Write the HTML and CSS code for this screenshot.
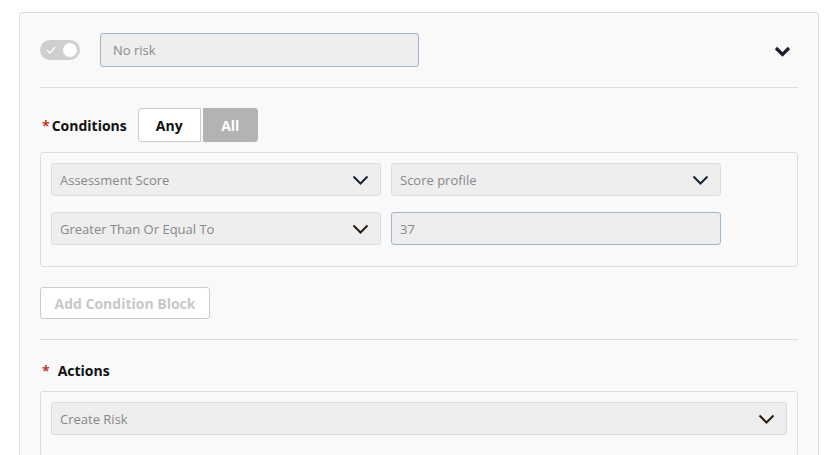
FILE: index.html
```html
<!DOCTYPE html>
<html lang="en">
<head>
    <meta charset="UTF-8">
    <title>Rule Editor</title>
    <link rel="stylesheet" href="styles.css">
</head>
<body>

<div class="rule-card">
    <div class="rule-header">
        <div class="toggle">
            <svg class="toggle-check" width="10" height="8" viewBox="0 0 10 8"><path d="M1 4l3 3 5-6" fill="none" stroke="#fff" stroke-width="1.3"/></svg>
            <span class="toggle-knob"></span>
        </div>
        <div class="text-input name-input">No risk</div>
        <div class="collapse-btn">
            <svg width="17" height="11" viewBox="0 0 17 11"><path d="M2 2l6.5 6.5L15 2" fill="none" stroke="#1c1f2a" stroke-width="3.2"/></svg>
        </div>
    </div>

    <hr class="divider">

    <div class="section-label">
        <span class="req">*</span>Conditions
        <div class="seg">
            <button class="seg-btn active">Any</button>
            <button class="seg-btn off">All</button>
        </div>
    </div>

    <div class="block">
        <div class="block-row">
            <div class="select">Assessment Score
                <svg width="17" height="10" viewBox="0 0 17 10"><path d="M1.5 1.5l7 7 7-7" fill="none" stroke="#16243a" stroke-width="2"/></svg>
            </div>
            <div class="select">Score profile
                <svg width="17" height="10" viewBox="0 0 17 10"><path d="M1.5 1.5l7 7 7-7" fill="none" stroke="#16243a" stroke-width="2"/></svg>
            </div>
        </div>
        <div class="block-row">
            <div class="select">Greater Than Or Equal To
                <svg width="17" height="10" viewBox="0 0 17 10"><path d="M1.5 1.5l7 7 7-7" fill="none" stroke="#2a1c10" stroke-width="2"/></svg>
            </div>
            <div class="text-input value-input">37</div>
        </div>
    </div>

    <button class="add-btn">Add Condition Block</button>

    <hr class="divider">

    <div class="section-label actions-label">
        <span class="req">*</span>Actions
    </div>

    <div class="block">
        <div class="select full">Create Risk
            <svg width="17" height="10" viewBox="0 0 17 10"><path d="M1.5 1.5l7 7 7-7" fill="none" stroke="#2a1c10" stroke-width="2"/></svg>
        </div>
    </div>
</div>

</body>
</html>
```

FILE: styles.css
```css
body {
    font-family: 'Open Sans', sans-serif;
    margin: 0;
    padding: 12px 21px 0 19px;
    background: #fff;
    color: #222;
    height: 455px;
    overflow: hidden;
    box-sizing: border-box;
}
.rule-card {
    background: #f9f9f9;
    border: 1px solid #ddd;
    border-radius: 3px;
    padding: 20px 20px 0 20px;
    height: 460px;
}
.rule-header {
    display: flex;
    align-items: center;
    height: 34px;
}
.toggle {
    position: relative;
    width: 40px;
    height: 20px;
    border-radius: 10px;
    background: #cfcfcf;
    margin-right: 20px;
    flex-shrink: 0;
}
.toggle-check {
    position: absolute;
    left: 6px;
    top: 6px;
}
.toggle-knob {
    position: absolute;
    right: 3px;
    top: 3px;
    width: 14px;
    height: 14px;
    border-radius: 50%;
    background: #fff;
}
.text-input {
    box-sizing: border-box;
    background: #eee;
    border: 1px solid #9fb5d0;
    border-radius: 3px;
    font-size: 13px;
    color: #888;
    display: flex;
    align-items: center;
}
.name-input {
    width: 319px;
    height: 34px;
    padding-left: 12px;
}
.collapse-btn {
    margin-left: auto;
    width: 32px;
    display: flex;
    justify-content: center;
    padding-top: 2px;
}
.divider {
    border: none;
    border-top: 1px solid #ddd;
    margin: 20px 0;
}
.section-label {
    display: flex;
    align-items: center;
    font-size: 14px;
    font-weight: bold;
    color: #111;
}
.req {
    color: #c0392b;
    margin: 0 2px 0 2px;
}
.actions-label {
    height: 20px;
    margin-bottom: 11px;
}
.actions-label .req {
    margin-right: 8px;
}
.seg {
    display: flex;
    margin-left: 11px;
}
.seg-btn {
    font-family: 'Open Sans', sans-serif;
    font-size: 14px;
    font-weight: bold;
    height: 34px;
    border-radius: 3px;
    border: 1px solid #ccc;
}
.seg-btn.active {
    background: #fff;
    color: #111;
    width: 63px;
    border-radius: 3px 0 0 3px;
}
.seg-btn.off {
    background: #b3b3b3;
    border-color: #b3b3b3;
    color: #fff;
    width: 55px;
    margin-left: 2px;
    border-radius: 0 3px 3px 0;
}
.block {
    border: 1px solid #ddd;
    border-radius: 3px;
    padding: 10px 10px 21px 10px;
    margin-top: 10px;
}
.actions-label + .block {
    margin-top: 0;
}
.block-row {
    display: flex;
    gap: 10px;
    margin-bottom: 16px;
}
.block-row:last-child {
    margin-bottom: 0;
}
.select {
    box-sizing: border-box;
    width: 330px;
    height: 33px;
    background: #eee;
    border: 1px solid #ddd;
    border-radius: 3px;
    padding: 0 11px 0 8px;
    font-size: 13px;
    color: #888;
    display: flex;
    align-items: center;
    justify-content: space-between;
}
.select.full {
    width: 100%;
}
.value-input {
    width: 330px;
    height: 33px;
    padding-left: 8px;
}
.add-btn {
    display: block;
    margin-top: 20px;
    width: 170px;
    height: 32px;
    background: #fff;
    border: 1px solid #ccc;
    border-radius: 3px;
    font-family: 'Open Sans', sans-serif;
    font-size: 14px;
    font-weight: bold;
    color: #c8c8c8;
}
```
